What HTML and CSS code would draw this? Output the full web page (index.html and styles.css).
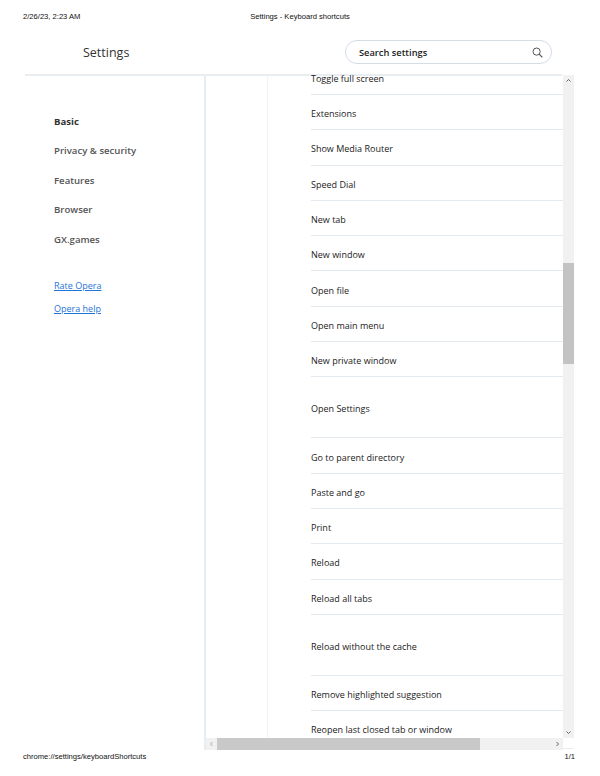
FILE: index.html
```html
<!DOCTYPE html>
<html>
<head>
<meta charset="utf-8">
<link rel="stylesheet" href="styles.css">
</head>
<body>
<header class="print-head">
  <span class="ph-left">2/26/23, 2:23 AM</span>
  <span class="ph-title">Settings - Keyboard shortcuts</span>
  <span></span>
</header>
<div class="app">
  <div class="toolbar">
    <div class="tb-title">Settings</div>
    <div class="search">
      <span class="search-text">Search settings</span>
      <svg class="search-icon" width="11" height="11" viewBox="0 0 11 11"><circle cx="4.6" cy="4.6" r="3.6" fill="none" stroke="#555" stroke-width="1"/><path d="M7.2 7.2 L10 10" stroke="#555" stroke-width="1.1" stroke-linecap="round"/></svg>
    </div>
  </div>
  <div class="main">
    <nav class="sidebar">
      <div class="nav-item active">Basic</div>
      <div class="nav-item">Privacy &amp; security</div>
      <div class="nav-item">Features</div>
      <div class="nav-item">Browser</div>
      <div class="nav-item">GX.games</div>
      <div class="links">
        <a class="link" href="#">Rate Opera</a>
        <a class="link" href="#">Opera help</a>
      </div>
    </nav>
    <section class="content">
      <div class="content-top">
        <div class="viewport">
          <div class="gutter"></div>
          <div class="list">
            <div class="row">Toggle full screen</div>
            <div class="row">Extensions</div>
            <div class="row">Show Media Router</div>
            <div class="row">Speed Dial</div>
            <div class="row">New tab</div>
            <div class="row">New window</div>
            <div class="row">Open file</div>
            <div class="row">Open main menu</div>
            <div class="row">New private window</div>
            <div class="row tall">Open Settings</div>
            <div class="row">Go to parent directory</div>
            <div class="row">Paste and go</div>
            <div class="row">Print</div>
            <div class="row">Reload</div>
            <div class="row">Reload all tabs</div>
            <div class="row tall">Reload without the cache</div>
            <div class="row">Remove highlighted suggestion</div>
            <div class="row">Reopen last closed tab or window</div>
          </div>
        </div>
        <div class="vscroll">
          <svg class="arrow" width="11" height="11" viewBox="0 0 11 11"><path d="M3.5 6.5 L5.5 4.5 L7.5 6.5" fill="none" stroke="#666" stroke-width="1"/></svg>
          <div class="vspace"></div>
          <div class="vthumb"></div>
          <div class="vfill"></div>
          <svg class="arrow" width="11" height="11" viewBox="0 0 11 11"><path d="M3.5 4.5 L5.5 6.5 L7.5 4.5" fill="none" stroke="#666" stroke-width="1"/></svg>
        </div>
      </div>
      <div class="content-bottom">
        <div class="hscroll">
          <svg class="harrow" width="11" height="12" viewBox="0 0 11 12"><path d="M6.5 4 L4.5 6 L6.5 8" fill="none" stroke="#aaa" stroke-width="1"/></svg>
          <div class="hthumb"></div>
          <div class="hfill"></div>
          <svg class="harrow" width="11" height="12" viewBox="0 0 11 12"><path d="M4.5 4 L6.5 6 L4.5 8" fill="none" stroke="#666" stroke-width="1"/></svg>
        </div>
        <div class="corner"></div>
      </div>
    </section>
  </div>
</div>
<footer class="print-foot">
  <span>chrome://settings/keyboardShortcuts</span>
  <span>1/1</span>
</footer>
</body>
</html>
```

FILE: styles.css
```css
* { box-sizing: border-box; }
html, body { margin: 0; padding: 0; background: #fff; }
body {
  width: 600px;
  height: 776px;
  overflow: hidden;
  font-family: "Open Sans", "Noto Sans", sans-serif;
  color: #222;
}
.print-head {
  display: grid;
  grid-template-columns: 1fr auto 1fr;
  padding: 12px 23px 0 23px;
  height: 30px;
  font-family: "Liberation Sans", Arial, sans-serif;
  font-size: 7.6px;
  line-height: 10px;
  color: #111;
}
.app {
  margin-left: 25px;
  width: 549px;
  height: 720px;
  display: flex;
  flex-direction: column;
}
.toolbar {
  height: 46px;
  border-bottom: 2px solid #e9eef3;
  display: flex;
  align-items: flex-start;
  width: 537px;
}
.tb-title {
  width: 320px;
  padding-left: 58px;
  padding-top: 14px;
  font-size: 12.5px;
  line-height: 18px;
  color: #333;
}
.search {
  margin-top: 10px;
  width: 207px;
  height: 24px;
  border: 1px solid #d3dde8;
  border-radius: 12px;
  display: flex;
  align-items: center;
  justify-content: space-between;
  padding: 0 8px 0 13px;
}
.search-text {
  font-size: 9.3px;
  font-weight: 600;
  color: #222;
}
.search-icon { display: block; }
.main {
  flex: 1;
  display: flex;
  min-height: 0;
}
.sidebar {
  width: 181px;
  border-right: 2px solid #e8edf2;
  padding-top: 38px;
  padding-left: 29px;
  display: flex;
  flex-direction: column;
}
.nav-item {
  height: 29.4px;
  font-size: 9.6px;
  font-weight: 600;
  color: #555;
  line-height: 16px;
}
.nav-item.active { color: #333; font-weight: 700; }
.links {
  margin-top: 17px;
  display: flex;
  flex-direction: column;
  gap: 7px;
}
.link {
  font-size: 9px;
  line-height: 16px;
  color: #1f74d8;
  text-decoration: underline;
}
.content {
  flex: 1;
  display: flex;
  flex-direction: column;
  min-width: 0;
}
.content-top {
  flex: 1;
  display: flex;
  min-height: 0;
  margin-top: -1px;
}
.viewport {
  flex: 1;
  display: flex;
  overflow: hidden;
  padding-top: 1px;
}
.gutter {
  width: 62px;
  border-right: 1px solid #f1f4f7;
  flex: none;
}
.list {
  flex: 1;
  padding-left: 43px;
  margin-top: -16.3px;
}
.row {
  height: 35.3px;
  border-bottom: 1px solid #e2e9f1;
  display: flex;
  align-items: center;
  padding-top: 3px;
  font-size: 9px;
  color: #222;
  white-space: nowrap;
}
.row.tall { height: 61px; }
.vscroll {
  width: 11px;
  background: #f1f1f1;
  display: flex;
  flex-direction: column;
}
.arrow { display: block; flex: none; }
.vspace { height: 177px; flex: none; }
.vthumb { height: 101px; background: #c3c3c3; flex: none; }
.vfill { flex: 1; }
.content-bottom {
  height: 12px;
  display: flex;
}
.hscroll {
  width: 357px;
  background: #f1f1f1;
  display: flex;
  align-items: center;
}
.harrow { display: block; flex: none; }
.hthumb { width: 263px; height: 12px; background: #c9c9c9; flex: none; }
.hfill { flex: 1; }
.corner { flex: 1; border-top: 1px solid #e8edf2; margin-top: 10px; }
.print-foot {
  display: flex;
  justify-content: space-between;
  padding: 2px 25px 0 23px;
  font-family: "Liberation Sans", Arial, sans-serif;
  font-size: 7.6px;
  line-height: 10px;
  color: #111;
}
```
